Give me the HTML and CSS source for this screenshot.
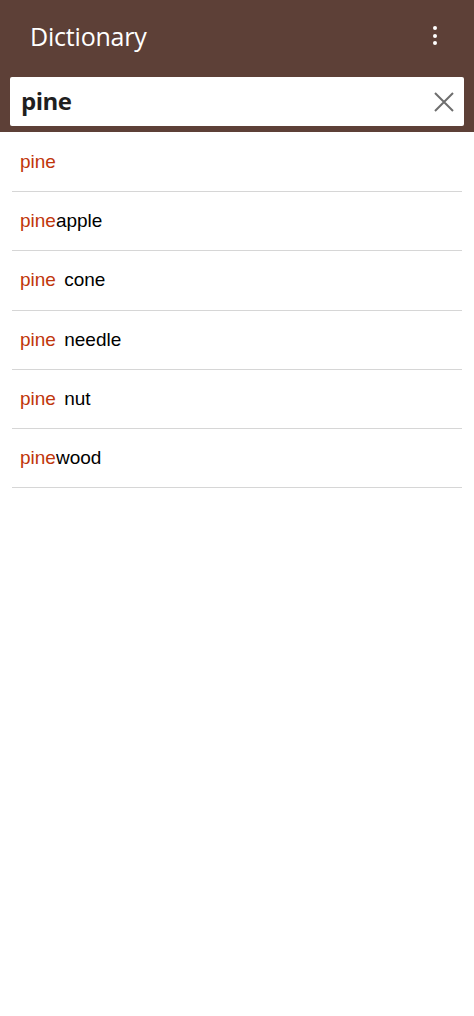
FILE: index.html
```html
<!DOCTYPE html>
<html lang="en">
<head>
    <meta charset="UTF-8">
    <meta name="viewport" content="width=device-width, initial-scale=1.0">
    <title>Dictionary</title>
    <link rel="stylesheet" href="styles.css">
</head>
<body>
    <header class="header">
        <div class="toolbar">
            <h1>Dictionary</h1>
            <button class="menu-button" aria-label="More options">
                <span class="dot"></span>
                <span class="dot"></span>
                <span class="dot"></span>
            </button>
        </div>
        <div class="search-box">
            <span class="search-text">pine</span>
            <button class="clear-button" aria-label="Clear">
                <svg width="22" height="22" viewBox="0 0 22 22">
                    <path d="M2 2 L20 20 M20 2 L2 20" stroke="#6e6e6e" stroke-width="2" fill="none"/>
                </svg>
            </button>
        </div>
    </header>

    <ul class="results">
        <li class="result"><span class="match">pine</span></li>
        <li class="result"><span class="match">pine</span>apple</li>
        <li class="result"><span class="match">pine</span><span class="rest"> cone</span></li>
        <li class="result"><span class="match">pine</span><span class="rest"> needle</span></li>
        <li class="result"><span class="match">pine</span><span class="rest"> nut</span></li>
        <li class="result"><span class="match">pine</span>wood</li>
    </ul>
</body>
</html>
```

FILE: styles.css
```css
/* Estilo base */
body {
    font-family: "Liberation Sans", Arial, sans-serif;
    margin: 0;
    padding: 0;
    background: #ffffff;
}

.header {
    background: #5d4037;
    height: 132px;
    box-sizing: border-box;
    padding: 0 10px 6px 10px;
    display: flex;
    flex-direction: column;
}

.toolbar {
    height: 77px;
    display: flex;
    justify-content: space-between;
    align-items: center;
    padding: 0 0 6px 20px;
    box-sizing: border-box;
}

.toolbar h1 {
    margin: 0;
    color: #ffffff;
    font-family: "Open Sans", "Noto Sans", sans-serif;
    font-size: 25px;
    font-weight: 500;
    letter-spacing: -0.2px;
}

.menu-button {
    background: none;
    border: none;
    padding: 0;
    margin-right: 27px;
    display: flex;
    flex-direction: column;
    gap: 3.5px;
}

.dot {
    width: 4px;
    height: 4px;
    border-radius: 50%;
    background: #ffffff;
}

.search-box {
    background: #ffffff;
    height: 49px;
    border-radius: 2px;
    display: flex;
    align-items: center;
    justify-content: space-between;
    padding: 0 9px 0 11px;
}

.search-text {
    font-family: "Open Sans", "Noto Sans", sans-serif;
    font-size: 24px;
    font-weight: 700;
    color: #1f1f1f;
    letter-spacing: -0.5px;
    margin-top: -2px;
}

.clear-button {
    background: none;
    border: none;
    padding: 0;
    width: 22px;
    height: 22px;
}

.results {
    list-style: none;
    margin: 0;
    padding: 1px 12px 0 12px;
}

.result {
    height: 59.2px;
    box-sizing: border-box;
    border-bottom: 1px solid #d6d6d6;
    display: flex;
    align-items: center;
    padding: 0 0 0 8px;
    font-size: 19px;
    color: #000000;
    white-space: pre;
}

.match {
    color: #c0360c;
}

.rest {
    margin-left: 3px;
}
```
